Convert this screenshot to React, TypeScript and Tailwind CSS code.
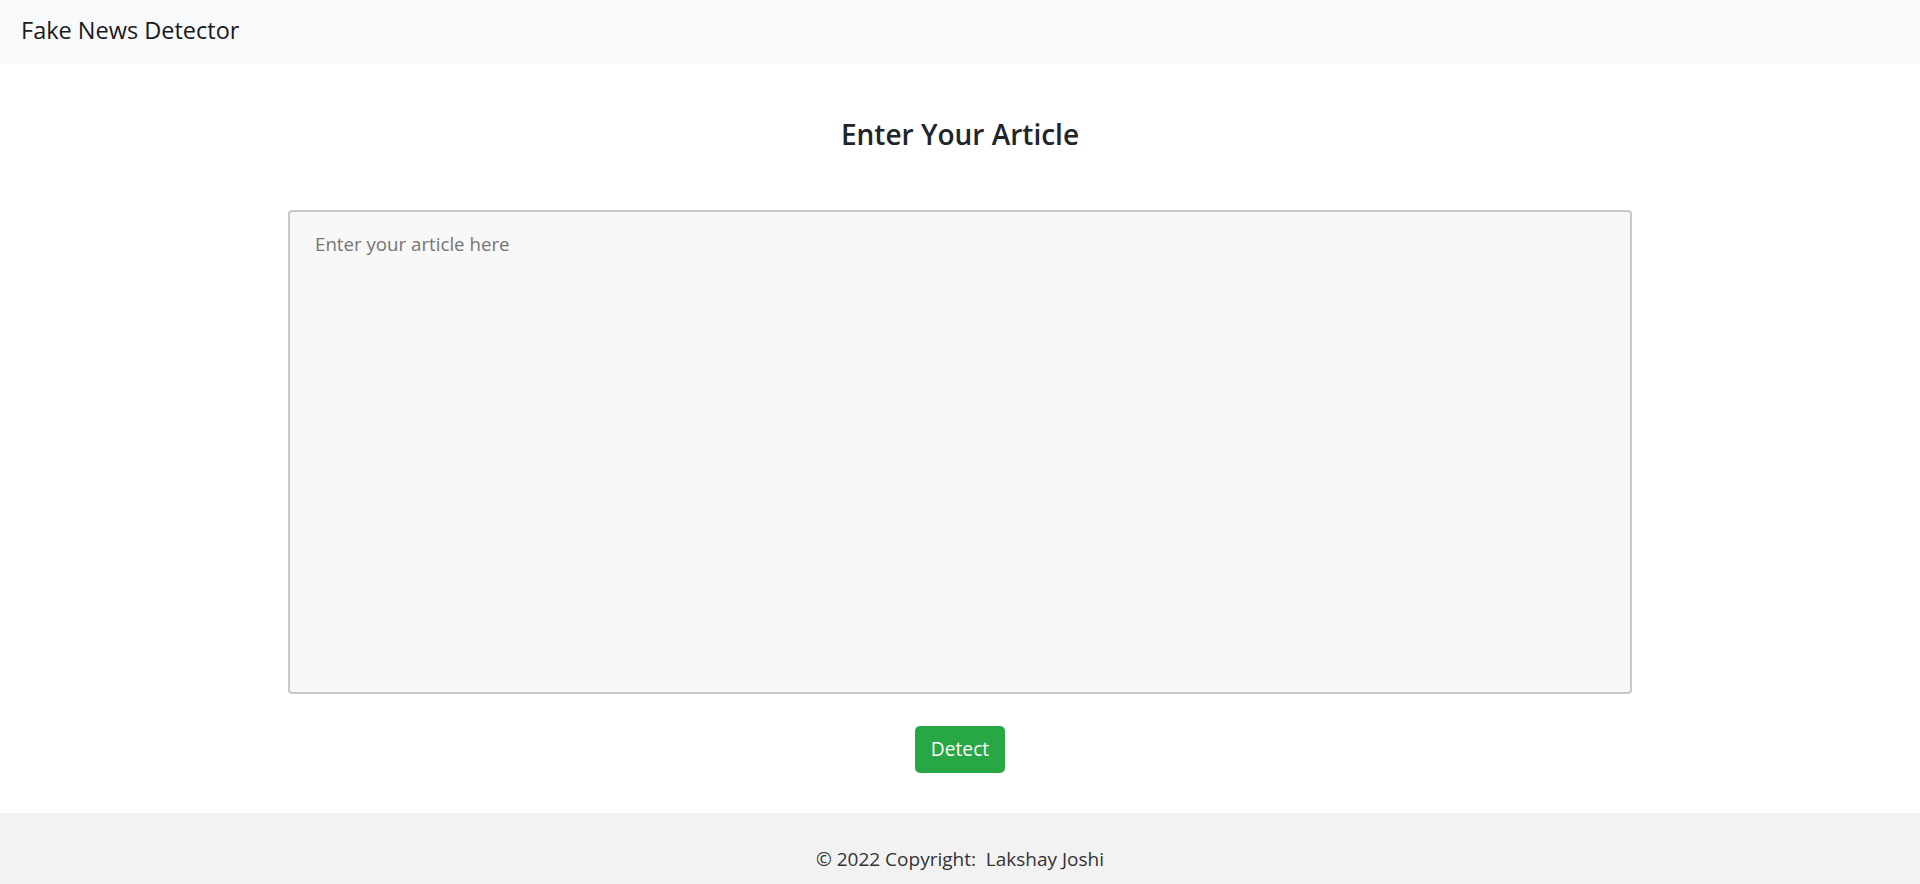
import React from "react";

export default function App() {
  return (
    <div className="min-h-screen bg-white flex flex-col" style={{ fontFamily: '"Open Sans", "Noto Sans", sans-serif' }}>
      <nav className="h-[64px] bg-[#f8f9fa] flex items-center px-[21px]">
        <span className="text-[23.5px] text-[#1a1a1a] leading-none -mt-[3px]">Fake News Detector</span>
      </nav>
      <main className="flex flex-col items-center">
        <h3 className="mt-[52px] text-[28px] leading-[36px] font-semibold text-[#212529]">Enter Your Article</h3>
        <textarea
          className="mt-[58px] w-[70%] h-[484px] border-2 border-[#c9c9c9] rounded-[4px] bg-[#f8f8f8] px-[25px] pt-[18px] pb-[16px] text-[18.7px] leading-[27px] text-[#495057] placeholder:text-[#757575] outline-none resize-none"
          placeholder="Enter your article here"
        />
        <button className="mt-[32px] w-[90px] h-[47px] rounded-[5px] bg-[#28a745] text-white text-[19.2px]">Detect</button>
      </main>
      <footer className="mt-[40px] bg-[#f2f2f2] pt-[34px] pb-[34px] text-center text-[19px] leading-[24px] text-[#333333]">
        © 2022 Copyright:&nbsp; Lakshay Joshi
      </footer>
    </div>
  );
}
